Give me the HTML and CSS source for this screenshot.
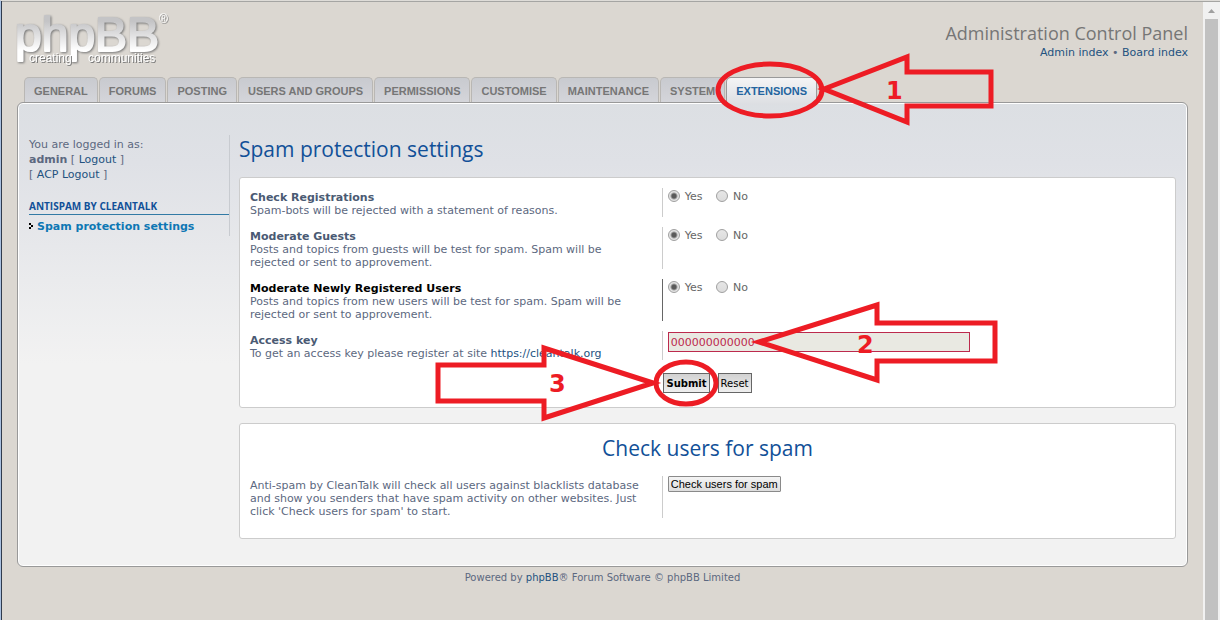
FILE: index.html
```html
<!DOCTYPE html>
<html lang="en">
<head>
    <meta charset="UTF-8">
    <meta name="viewport" content="width=device-width, initial-scale=1.0">
    <title>Spam protection settings</title>
    <link rel="stylesheet" href="styles.css">
</head>
<body>
    <div class="wrap">
        <header class="page-header">
            <svg class="logo" width="156" height="58" viewBox="0 0 156 58" role="img" aria-label="phpBB">
                <defs>
                    <linearGradient id="silver" x1="0" y1="0" x2="0" y2="1">
                        <stop offset="0.25" stop-color="#c4c4c6"/>
                        <stop offset="0.8" stop-color="#ffffff"/>
                    </linearGradient>
                </defs>
                <g class="logo-name">
                    <text x="-2" y="40" fill="url(#silver)" stroke="url(#silver)">phpBB</text>
                </g>
                <text class="logo-reg" x="142" y="12">®</text>
                <text class="logo-tag" x="12" y="51">creating</text>
                <text class="logo-tag" x="71" y="51">communities</text>
            </svg>
            <div class="header-text">
                <h1>Administration Control Panel</h1>
                <p><a href="#">Admin index</a> &bull; <a href="#">Board index</a></p>
            </div>
        </header>

        <nav class="tabs">
            <a href="#">GENERAL</a>
            <a href="#">FORUMS</a>
            <a href="#">POSTING</a>
            <a href="#">USERS AND GROUPS</a>
            <a href="#">PERMISSIONS</a>
            <a href="#">CUSTOMISE</a>
            <a href="#">MAINTENANCE</a>
            <a href="#">SYSTEM</a>
            <a href="#" class="active">EXTENSIONS</a>
        </nav>

        <div class="panel">
            <aside class="menu">
                <p>You are logged in as:<br><strong>admin</strong> [ <a href="#">Logout</a> ]<br>[ <a href="#">ACP Logout</a> ]</p>
                <h3>ANTISPAM BY CLEANTALK</h3>
                <a href="#" class="menu-item">
                    <svg width="4" height="7" viewBox="0 0 4 7" shape-rendering="crispEdges"><path d="M0 0h2v2h2v2H2v2H0V4h2V2H0z"/></svg>
                    Spam protection settings
                </a>
            </aside>

            <main class="main">
                <h2>Spam protection settings</h2>
                <form class="box">
                    <div class="row">
                        <div class="desc"><b>Check Registrations</b><br>Spam-bots will be rejected with a statement of reasons.</div>
                        <div class="value">
                            <label><input type="radio" name="regs" checked> Yes</label>
                            <label><input type="radio" name="regs"> No</label>
                        </div>
                    </div>
                    <div class="row">
                        <div class="desc"><b>Moderate Guests</b><br>Posts and topics from guests will be test for spam. Spam will be rejected or sent to approvement.</div>
                        <div class="value">
                            <label><input type="radio" name="guests" checked> Yes</label>
                            <label><input type="radio" name="guests"> No</label>
                        </div>
                    </div>
                    <div class="row current">
                        <div class="desc"><b>Moderate Newly Registered Users</b><br>Posts and topics from new users will be test for spam. Spam will be rejected or sent to approvement.</div>
                        <div class="value">
                            <label><input type="radio" name="newusers" checked> Yes</label>
                            <label><input type="radio" name="newusers"> No</label>
                        </div>
                    </div>
                    <div class="row">
                        <div class="desc"><label for="key"><b>Access key</b></label><br>To get an access key please register at site <a href="#">https://cleantalk.org</a></div>
                        <div class="value"><input type="text" id="key" value="000000000000"></div>
                    </div>
                    <div class="buttons">
                        <button type="submit" class="submit">Submit</button>
                        <button type="reset">Reset</button>
                    </div>
                </form>

                <section class="box">
                    <h2>Check users for spam</h2>
                    <div class="row">
                        <div class="desc">Anti-spam by CleanTalk will check all users against blacklists database and show you senders that have spam activity on other websites. Just click 'Check users for spam' to start.</div>
                        <div class="value"><button type="button" class="check">Check users for spam</button></div>
                    </div>
                </section>
            </main>
        </div>

        <footer>Powered by <a href="#">phpBB</a>® Forum Software © phpBB Limited</footer>
    </div>

    <div class="scrollbar">
        <svg width="7" height="4" viewBox="0 0 7 4"><path d="M0 4L3.500 0L7 4z" fill="#a0a0a0"/></svg>
        <div class="thumb"></div>
    </div>

    <!-- step markers drawn over the page -->
    <svg class="marks" width="1220" height="620" viewBox="0 0 1220 620">
        <g fill="none" stroke="#ed1c24" stroke-width="5">
            <ellipse cx="770" cy="90" rx="52" ry="26"/>
            <path d="M824 89L907 57V72H991V106H907V122Z"/>
            <path d="M759 342L877 305V323H995V361H877V380Z"/>
            <path d="M653 383L544 348V365H438V401H544V418Z"/>
            <ellipse cx="686" cy="383" rx="30" ry="21"/>
        </g>
        <text x="886" y="99">1</text>
        <text x="857" y="353">2</text>
        <text x="549" y="392">3</text>
    </svg>
</body>
</html>
```

FILE: styles.css
```css
* {
    box-sizing: border-box;
}

body {
    margin: 0;
    min-height: 100vh;
    display: flex;
    position: relative;
    padding: 1px 0 0 1px;
    background-color: #dbd7d1;
    border-top: 1px solid #dedcd8;
    border-left: 1px solid #a9c0e0;
    box-shadow: inset 1px 0 0 #2f3b4d, inset 0 1px 0 #a5a5a3;
    font-family: "DejaVu Sans", Verdana, sans-serif;
    font-size: 11px;
    line-height: 13px;
    color: #5c6880;
    overflow: hidden;
}

a {
    color: #23527f;
    text-decoration: none;
}

h1, h2, h3, p {
    margin: 0;
    font-weight: normal;
}

h1, h2 {
    font-family: "Open Sans", "Trebuchet MS", sans-serif;
}

.wrap {
    flex: 1;
    padding: 0 15px;
}

/* header */
.page-header {
    display: flex;
    justify-content: space-between;
    height: 75px;
    padding-top: 9px;
}

.logo {
    overflow: visible;
}

.logo-name {
    font-family: "Liberation Sans", Arial, sans-serif;
    font-size: 48px;
    stroke-width: 2px;
    stroke-linejoin: round;
    filter: drop-shadow(1px 1px 1px #777777);
}

.logo-reg {
    font-family: "Liberation Sans", Arial, sans-serif;
    font-size: 12px;
    fill: #ffffff;
    filter: drop-shadow(1px 1px 0 #888888);
}

.logo-tag {
    font-family: "Liberation Sans", Arial, sans-serif;
    font-size: 12px;
    fill: #ffffff;
    filter: drop-shadow(1px 1px 0 #777777);
}

.header-text {
    padding-top: 10px;
    text-align: right;
}

h1 {
    font-size: 18px;
    line-height: 25px;
    color: #767676;
}

/* tabs */
.tabs {
    display: flex;
    gap: 1px;
    padding-left: 7px;
}

.tabs a {
    height: 25px;
    padding: 0 9px;
    border: 1px solid #b9b7b4;
    border-bottom: 0;
    border-radius: 5px 5px 0 0;
    background: linear-gradient(#c8cacf, #d4d5da);
    font-family: "Liberation Sans", Arial, sans-serif;
    font-size: 11px;
    font-weight: bold;
    line-height: 27px;
    color: #767676;
}

.tabs .active {
    height: 28px;
    margin-bottom: -3px;
    position: relative;
    border-color: #999999;
    background: linear-gradient(#f4f4f5, #dcdee2);
    color: #23649f;
}

/* content panel */
.panel {
    display: flex;
    gap: 9px;
    padding: 32px 11px 27px;
    border: 1px solid #999999;
    border-radius: 6px;
    background: linear-gradient(#dcdfe3, #dfe1e6 60px, #f2f2f2 260px);
    box-shadow: inset 0 0 0 1px #ffffff;
}

.menu {
    width: 201px;
    height: 101px;
    border-right: 1px solid #c8cbd0;
}

.menu p {
    line-height: 15px;
    padding-top: 2px;
}

.menu h3 {
    margin-top: 17px;
    padding-bottom: 1px;
    border-bottom: 1px solid #327aa5;
    font-family: "Open Sans", sans-serif;
    font-size: 10px;
    font-weight: bold;
    line-height: 14px;
    color: #115098;
}

.menu-item {
    display: flex;
    align-items: center;
    gap: 4px;
    padding-top: 5px;
    font-weight: bold;
    color: #0e77b4;
}

.main {
    flex: 1;
}

h2 {
    font-size: 21px;
    line-height: 28px;
    color: #115098;
}

.box {
    padding: 10px 10px 14px;
    border: 1px solid #cccccc;
    border-radius: 3px;
    background-color: #ffffff;
}

form.box {
    margin: 14px 0 15px;
}

section.box {
    padding-bottom: 10px;
}

section.box h2 {
    margin-bottom: 14px;
    text-align: center;
}

.row {
    display: flex;
    margin-bottom: 10px;
}

.desc {
    width: 45%;
    padding: 3px 16px 0 0;
}

.desc b {
    color: #4a5a73;
}

.current b {
    color: #000000;
}

.value {
    flex: 1;
    padding-left: 5px;
    border-left: 1px solid #cccccc;
}

.current .value {
    border-left-color: #666666;
}

.value label {
    display: inline-flex;
    align-items: center;
    gap: 5px;
    height: 16px;
    margin-right: 10px;
    color: #666666;
}

input[type="radio"] {
    appearance: none;
    width: 12px;
    height: 12px;
    margin: 0;
    border: 1px solid #a0a0a0;
    border-radius: 50%;
    background: linear-gradient(#e6e6e6, #dcdcdc);
}

input[type="radio"]:checked {
    background: radial-gradient(circle, #5a5a5a 0, #5a5a5a 2px, #e4e4e4 4px);
}

input[type="text"] {
    display: block;
    width: 302px;
    height: 20px;
    margin-top: 1px;
    padding: 0 2px;
    border: 1px solid #bc2a4d;
    background-color: #e9e9e2;
    font-family: inherit;
    font-size: 11px;
    color: #bc2a4d;
}

.buttons {
    display: flex;
    justify-content: center;
    gap: 8px;
    padding-top: 3px;
}

button {
    height: 20px;
    padding: 0 2px;
    border: 1px solid #666666;
    background: linear-gradient(#d2d2d2, #efefef);
    font-family: inherit;
    font-size: 10px;
    color: #000000;
}

.submit {
    font-weight: bold;
}

.check {
    display: block;
    height: 16px;
    padding: 0 2px;
    border-color: #8a8a8a;
    border-radius: 1px;
    background: linear-gradient(#f4f4f4, #dddddd);
    font-family: "Liberation Sans", Arial, sans-serif;
    font-size: 11px;
    line-height: 13px;
}

footer {
    padding-top: 4px;
    text-align: center;
    font-size: 10px;
}

/* browser scrollbar */
.scrollbar {
    width: 17px;
    padding: 7px 2px 0;
    display: flex;
    flex-direction: column;
    align-items: center;
    gap: 6px;
    background-color: #f1f1f1;
}

.thumb {
    flex: 1;
    width: 13px;
    background-color: #c1c1c1;
}

.marks {
    position: absolute;
    top: -1px;
    left: -1px;
    pointer-events: none;
}

.marks text {
    font-size: 24px;
    font-weight: bold;
    fill: #ed1c24;
}
```
